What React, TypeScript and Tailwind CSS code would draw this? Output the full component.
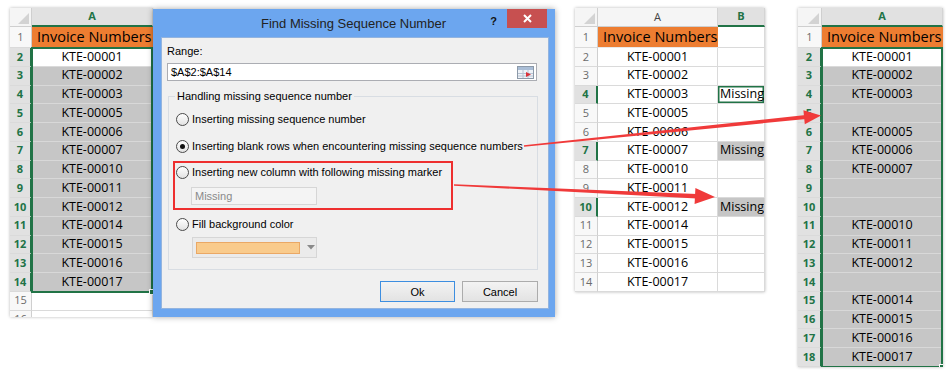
import React from 'react';

type Cell = { t?: string; kind?: 'w' | 'g' | 'o'; active?: boolean };
type Row = { n: number; sel?: boolean; h1?: boolean; cells: Cell[] };
type Col = { label: string; w: string; sel?: boolean };

function Sheet({
  rowW,
  cols,
  rows,
  outline,
  className,
}: {
  rowW: string;
  cols: Col[];
  rows: Row[];
  outline?: React.ReactNode;
  className: string;
}) {
  return (
    <div
      className={`relative shrink-0 overflow-hidden bg-white font-['Open_Sans',sans-serif] shadow-[0_0_3px_rgba(0,0,0,0.28)] ${className}`}
    >
      <div className="flex h-[19px]">
        <div className={`${rowW} relative shrink-0 border-r border-b border-[#cfcfcf] bg-[#f5f5f5]`}>
          <svg className="absolute right-[2px] bottom-[2px]" width="11" height="11" viewBox="0 0 11 11">
            <polygon points="11,0 11,11 0,11" fill="#d3d3d3" />
          </svg>
        </div>
        {cols.map((c) => (
          <div
            key={c.label}
            className={`${c.w} shrink-0 flex items-center justify-center text-[11px] border-r border-r-[#d4d4d4] ${
              c.sel
                ? 'bg-[#e1e1e1] text-[#217346] font-bold border-b-2 border-b-[#217346]'
                : 'bg-[#f5f5f5] text-[#444] border-b border-b-[#cfcfcf]'
            }`}
          >
            {c.label}
          </div>
        ))}
      </div>
      {rows.map((r) => (
        <div key={r.n} className={`flex ${r.h1 ? 'h-[21px]' : 'h-[18.75px]'}`}>
          <div
            className={`${rowW} shrink-0 flex items-center justify-center text-[11px] border-b border-b-[#dadada] ${
              r.sel
                ? 'bg-[#e1e1e1] text-[#217346] font-bold border-r-2 border-r-[#217346]'
                : 'bg-[#f8f8f8] text-[#6b6b6b] border-r border-r-[#cfcfcf]'
            }`}
          >
            {r.n}
          </div>
          {r.cells.map((c, i) => {
            const w = cols[i].w;
            if (c.kind === 'o') {
              return (
                <div
                  key={i}
                  className={`${w} shrink-0 bg-[#ed7d31] text-black text-[14.5px] leading-[20px] pl-[5px] whitespace-nowrap overflow-hidden border-b border-b-[#e8e8e8]`}
                >
                  {c.t}
                </div>
              );
            }
            if (c.kind === 'g') {
              return (
                <div
                  key={i}
                  className={`${w} shrink-0 bg-[#c6c6c6] text-black text-[12.5px] flex items-center ${
                    cols[i].label === 'B' ? 'justify-start pl-[2px]' : 'justify-center'
                  } border-b border-b-[#d8d8d8] border-r border-r-[#d0d0d0] whitespace-nowrap overflow-hidden`}
                >
                  {c.t}
                </div>
              );
            }
            return (
              <div
                key={i}
                className={`${w} shrink-0 bg-white text-black text-[12.5px] flex items-center ${
                  cols[i].label === 'B' ? 'justify-start pl-[2px]' : 'justify-center'
                } border-b border-b-[#dadada] border-r border-r-[#dadada] whitespace-nowrap overflow-hidden ${
                  c.active ? 'shadow-[inset_0_0_0_1.5px_#217346]' : ''
                }`}
              >
                {c.t}
              </div>
            );
          })}
        </div>
      ))}
      {outline}
    </div>
  );
}

const nums = ['00001', '00002', '00003', '00005', '00006', '00007', '00010', '00011', '00012', '00014', '00015', '00016', '00017'];

const leftRows: Row[] = [
  { n: 1, h1: true, cells: [{ t: 'Invoice Numbers', kind: 'o' }] },
  ...nums.map((v, i) => ({
    n: i + 2,
    sel: true,
    cells: [{ t: `KTE-${v}`, kind: (i === 0 ? 'w' : 'g') as 'w' | 'g' }],
  })),
  { n: 15, cells: [{ kind: 'w' }] },
  { n: 16, cells: [{ kind: 'w' }] },
];

const midRows: Row[] = [
  { n: 1, h1: true, cells: [{ t: 'Invoice Numbers', kind: 'o' }, { kind: 'w' }] },
  ...nums.map((v, i) => {
    const n = i + 2;
    const b: Cell =
      n === 4
        ? { t: 'Missing', kind: 'w', active: true }
        : n === 7 || n === 10
        ? { t: 'Missing', kind: 'g' }
        : { kind: 'w' };
    return { n, sel: n === 4 || n === 7 || n === 10, cells: [{ t: `KTE-${v}`, kind: 'w' as const }, b] };
  }),
];

const rightVals = ['00001', '00002', '00003', '', '00005', '00006', '00007', '', '', '00010', '00011', '00012', '', '00014', '00015', '00016', '00017'];
const rightRows: Row[] = [
  { n: 1, h1: true, cells: [{ t: 'Invoice Numbers', kind: 'o' }] },
  ...rightVals.map((v, i) => ({
    n: i + 2,
    sel: true,
    cells: [{ t: v ? `KTE-${v}` : '', kind: (i === 0 ? 'w' : 'g') as 'w' | 'g' }],
  })),
];

function SelOutline({ cls }: { cls: string }) {
  return (
    <div className={`absolute border-2 border-[#217346] ${cls}`}>
      <div className="absolute -right-[4px] -bottom-[4px] w-[6px] h-[6px] bg-[#217346] border border-white" />
    </div>
  );
}

function Radio({ checked }: { checked?: boolean }) {
  return (
    <span className="w-[13px] h-[13px] rounded-full border border-[#4a4a4a] bg-linear-to-b from-[#ffffff] to-[#e2e2e2] flex items-center justify-center shrink-0">
      {checked && <span className="w-[5px] h-[5px] rounded-full bg-[#111]" />}
    </span>
  );
}

function Dialog() {
  return (
    <div className="shrink-0 mt-[1px] w-[402px] h-[308px] bg-[#6ca6ef] flex flex-col font-['Liberation_Sans',Arial,sans-serif] shadow-[0_0_6px_rgba(0,0,0,0.35)] relative z-10">
      <div className="h-[28px] flex items-start shrink-0">
        <div className="pl-[108px] pt-[7px] text-[13px] leading-[16px] text-[#222]">Find Missing Sequence Number</div>
        <div className="ml-auto mt-[4px] mr-[10px] text-[11px] font-bold text-[#111]">?</div>
        <div className="mr-[8px] w-[40px] h-[19px] bg-[#c75050] flex items-center justify-center">
          <svg width="9" height="9" viewBox="0 0 9 9">
            <path d="M1 1 L8 8 M8 1 L1 8" stroke="white" strokeWidth="2" />
          </svg>
        </div>
      </div>
      <div className="ml-[8px] mr-[6px] h-[272px] bg-[#f0f0f0] border border-[#93b4df] flex flex-col pl-[5px] pr-[11px] text-[11px] leading-[14px] text-black">
        <div className="mt-[6px] h-[14px]">Range:</div>
        <div className="mt-[5px] h-[18px] w-[370px] bg-white border border-[#abadb3] flex items-center pl-[3px]">
          <span className="text-[11px]">$A$2:$A$14</span>
          <svg className="ml-auto mr-[2px]" width="17" height="13" viewBox="0 0 17 13">
            <rect x="0.5" y="0.5" width="16" height="12" fill="#eef2f7" stroke="#8c99a8" />
            <rect x="1" y="1" width="15" height="3" fill="#a9bdd6" />
            <path d="M1 7.5 H16 M1 10 H16 M6 4 V12 M11 4 V12" stroke="#b8c4d2" strokeWidth="1" />
            <path d="M9 6 L14 8.5 L9 11 Z" fill="#d9323a" />
          </svg>
        </div>
        <div className="relative mt-[15px] h-[174px] w-[370px] ml-[1px] border border-[#d8dde3] flex flex-col pl-[4px] pt-[15px]">
          <span className="absolute -top-[8px] left-[6px] px-[2px] bg-[#f0f0f0]">Handling missing sequence number</span>
          <div className="ml-[3px] flex items-center gap-[3px] h-[14px]">
            <Radio />
            <span>Inserting missing sequence number</span>
          </div>
          <div className="ml-[3px] mt-[13px] flex items-center gap-[3px] h-[14px]">
            <Radio checked />
            <span>Inserting blank rows when encountering missing sequence numbers</span>
          </div>
          <div className="mt-[8px] w-[280px] h-[49px] border-2 border-[#ee2f2f] pl-[1px] pt-[2px] flex flex-col">
            <div className="flex items-center gap-[3px] h-[14px]">
              <Radio />
              <span>Inserting new column with following missing marker</span>
            </div>
            <div className="ml-[15px] mt-[8px] w-[126px] h-[18px] bg-[#f4f4f4] border border-[#d6d6d6] flex items-center pl-[3px] text-[#8a8a8a]">
              Missing
            </div>
          </div>
          <div className="ml-[3px] mt-[7px] flex items-center gap-[3px] h-[14px]">
            <Radio />
            <span>Fill background color</span>
          </div>
          <div className="ml-[19px] mt-[6px] w-[125px] h-[21px] border border-[#d6d6d6] bg-[#ebebeb] flex items-center pl-[3px]">
            <div className="w-[104px] h-[12px] bg-[#f9cb8c] border border-[#eaa865]" />
            <svg className="ml-[7px]" width="8" height="5" viewBox="0 0 8 5">
              <polygon points="0,0 8,0 4,4.5" fill="#8a8a8a" />
            </svg>
          </div>
        </div>
        <div className="mt-[11px] flex justify-end gap-[7px] w-[371px]">
          <div className="w-[75px] h-[21px] border border-[#3d8ee0] bg-linear-to-b from-[#f3f3f3] to-[#e3e3e3] flex items-center justify-center">
            Ok
          </div>
          <div className="w-[76px] h-[21px] border border-[#acacac] bg-linear-to-b from-[#f3f3f3] to-[#e3e3e3] flex items-center justify-center">
            Cancel
          </div>
        </div>
      </div>
    </div>
  );
}

export default function App() {
  return (
    <div className="relative w-[950px] h-[374px] bg-white overflow-hidden flex items-start pt-[8px]">
      <Sheet
        className="ml-[10px] w-[143px] h-[309px]"
        rowW="w-[22px]"
        cols={[{ label: 'A', w: 'w-[121px]', sel: true }]}
        rows={leftRows}
        outline={<SelOutline cls="left-[21px] top-[39px] w-[122px] h-[245.75px]" />}
      />
      <Dialog />
      <Sheet
        className="ml-[20px] w-[190px]"
        rowW="w-[23px]"
        cols={[
          { label: 'A', w: 'w-[120px]' },
          { label: 'B', w: 'w-[47px]', sel: true },
        ]}
        rows={midRows}
      />
      <Sheet
        className="ml-[33px] w-[145px]"
        rowW="w-[24px]"
        cols={[{ label: 'A', w: 'w-[121px]', sel: true }]}
        rows={rightRows}
        outline={<SelOutline cls="left-[23px] top-[39px] w-[122px] h-[320.75px]" />}
      />
      <svg className="absolute inset-0 pointer-events-none z-20" width="950" height="374" viewBox="0 0 950 374">
        <polygon points="523.9,145.25 805.8,115 806.2,119 524.1,146.75" fill="#f03a3a" />
        <polygon points="821,115.5 803.4,110.2 804.8,124.2" fill="#f03a3a" />
        <polygon points="454,184.25 697.1,193.95 696.9,198.45 454,185.75" fill="#f03a3a" />
        <polygon points="715,197 695.4,188.1 694.6,204.1" fill="#f03a3a" />
      </svg>
    </div>
  );
}
